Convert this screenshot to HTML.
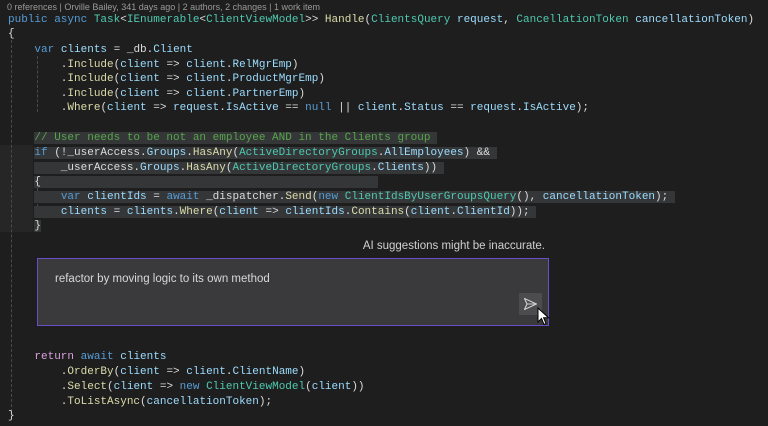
<!DOCTYPE html>
<html><head><meta charset="utf-8"><style>
body{margin:0;width:768px;height:426px;background:#1e1e1e;overflow:hidden;position:relative;font-family:"Liberation Mono",monospace;font-size:11px;color:#dcdcdc}
.l{position:absolute;left:8px;white-space:pre;height:14px;line-height:14px;margin-top:1px}
.k{color:#569cd6}.t{color:#4ec9b0}.m{color:#dcdcaa}.v{color:#9cdcfe}.c{color:#57a64a}.r{color:#d8a0df}
.s{background:#343638}
.g{position:absolute;border-left:1px dashed #4a4a4a;width:0}
</style></head><body>
<div style="position:absolute;left:0;top:145px;width:33px;height:87px;background:#262626"></div>
<div class="g" style="left:11px;top:40px;height:372px"></div>
<div class="g" style="left:37px;top:56px;height:56px"></div>
<div class="g" style="left:37px;top:188px;height:30px"></div>
<div style="position:absolute;left:7px;top:2px;font-family:'Liberation Sans',sans-serif;font-size:9px;color:#9a9a9a">0 references | Orville Bailey, 341 days ago | 2 authors, 2 changes | 1 work item</div>
<div class="l" style="top:12px"><span class="k">public async</span> <span class="t">Task</span>&lt;<span class="t">IEnumerable</span>&lt;<span class="t">ClientViewModel</span>&gt;&gt; <span class="m">Handle</span>(<span class="t">ClientsQuery</span> <span class="v">request</span>, <span class="t">CancellationToken</span> <span class="v">cancellationToken</span>)</div>
<div class="l" style="top:26px">{</div>
<div class="l" style="top:42px">    <span class="k">var</span> <span class="v">clients</span> = _db.<span class="v">Client</span></div>
<div class="l" style="top:57px">        .<span class="m">Include</span>(<span class="v">client</span> =&gt; <span class="v">client</span>.<span class="v">RelMgrEmp</span>)</div>
<div class="l" style="top:71px">        .<span class="m">Include</span>(<span class="v">client</span> =&gt; <span class="v">client</span>.<span class="v">ProductMgrEmp</span>)</div>
<div class="l" style="top:86px">        .<span class="m">Include</span>(<span class="v">client</span> =&gt; <span class="v">client</span>.<span class="v">PartnerEmp</span>)</div>
<div class="l" style="top:100px">        .<span class="m">Where</span>(<span class="v">client</span> =&gt; <span class="v">request</span>.<span class="v">IsActive</span> == <span class="k">null</span> || <span class="v">client</span>.<span class="v">Status</span> == <span class="v">request</span>.<span class="v">IsActive</span>);</div>
<div class="l" style="top:130px">    <span class="s"><span class="c">// User needs to be not an employee AND in the Clients group</span> </span></div>
<div class="l" style="top:145px">    <span class="s"><span class="k">if</span> (!_userAccess.<span class="v">Groups</span>.<span class="m">HasAny</span>(<span class="t">ActiveDirectoryGroups</span>.<span class="v">AllEmployees</span>) &amp;&amp; </span></div>
<div class="l" style="top:160px">    <span class="s">    _userAccess.<span class="v">Groups</span>.<span class="m">HasAny</span>(<span class="t">ActiveDirectoryGroups</span>.<span class="v">Clients</span>)) </span></div>
<div class="l" style="top:174px">    <span class="s">{                                                   </span></div>
<div class="l" style="top:189px">    <span class="s">    <span class="k">var</span> <span class="v">clientIds</span> = <span class="k">await</span> _dispatcher.<span class="m">Send</span>(<span class="k">new</span> <span class="t">ClientIdsByUserGroupsQuery</span>(), <span class="v">cancellationToken</span>); </span></div>
<div class="l" style="top:204px">    <span class="s">    <span class="v">clients</span> = <span class="v">clients</span>.<span class="m">Where</span>(<span class="v">client</span> =&gt; <span class="v">clientIds</span>.<span class="m">Contains</span>(<span class="v">client</span>.<span class="v">ClientId</span>)); </span></div>
<div class="l" style="top:218px">    <span class="s">}</span></div>
<div style="position:absolute;right:223px;top:240px;font-family:'Liberation Sans',sans-serif;font-size:11.5px;color:#d0d0d0">AI suggestions might be inaccurate.</div>
<div style="position:absolute;left:37px;top:258px;width:510px;height:66px;border:1px solid #6a4fc4;background:#3a393c"></div>
<div style="position:absolute;left:55px;top:273px;font-family:'Liberation Sans',sans-serif;font-size:11.5px;color:#d8d8d8">refactor by moving logic to its own method</div>
<div style="position:absolute;left:519px;top:293px;width:23px;height:22px;background:#4c4c4e"></div>
<svg style="position:absolute;left:523px;top:297px" width="15" height="14" viewBox="0 0 15 14"><path d="M1.5 1.5 L13.5 7 L1.5 12.5 L4 7 Z M4 7 H13.5" fill="none" stroke="#cfcfcf" stroke-width="1.1" stroke-linejoin="round"/></svg>
<svg style="position:absolute;left:537px;top:307px" width="13" height="19" viewBox="0 0 13 19"><path d="M1 1 L1 15 L4.5 11.5 L7 17.5 L9 16.6 L6.6 10.8 L11.5 10.8 Z" fill="#fff" stroke="#000" stroke-width="1"/></svg>
<div class="l" style="top:349px">    <span class="r">return</span> <span class="k">await</span> <span class="v">clients</span></div>
<div class="l" style="top:364px">        .<span class="m">OrderBy</span>(<span class="v">client</span> =&gt; <span class="v">client</span>.<span class="v">ClientName</span>)</div>
<div class="l" style="top:379px">        .<span class="m">Select</span>(<span class="v">client</span> =&gt; <span class="k">new</span> <span class="t">ClientViewModel</span>(<span class="v">client</span>))</div>
<div class="l" style="top:394px">        .<span class="m">ToListAsync</span>(<span class="v">cancellationToken</span>);</div>
<div class="l" style="top:408px">}</div>
</body></html>
